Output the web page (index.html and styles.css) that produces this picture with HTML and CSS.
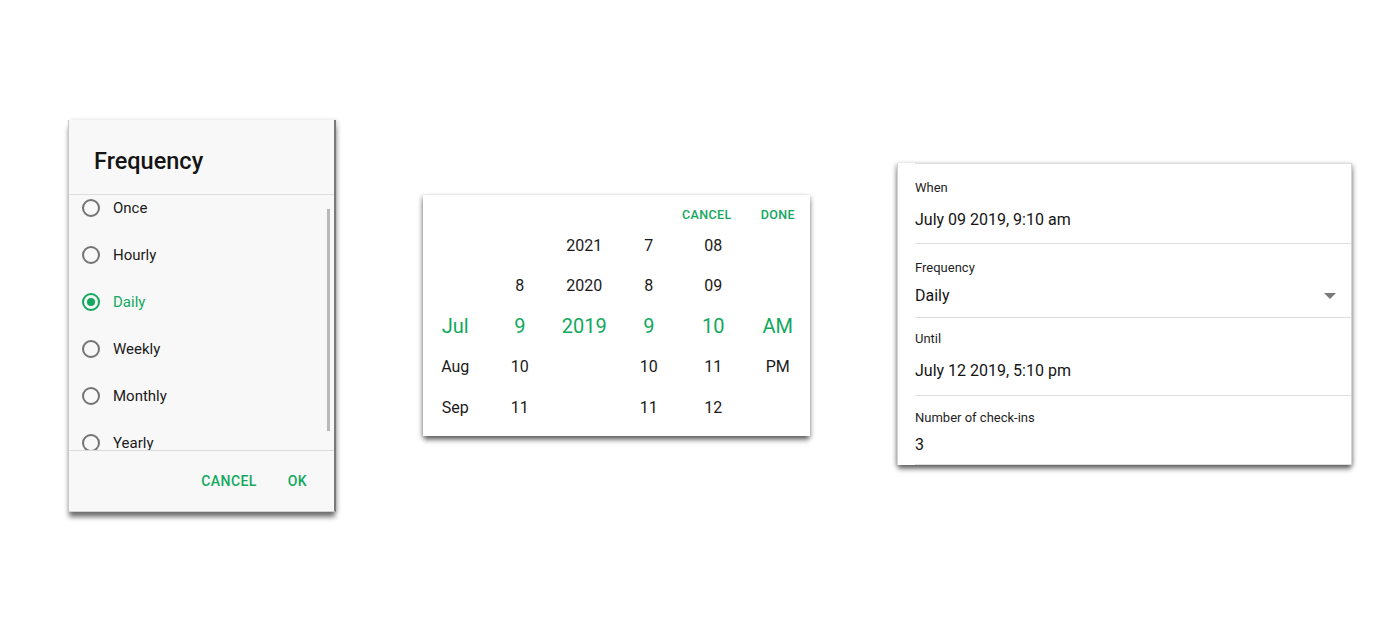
FILE: index.html
```html
<!DOCTYPE html>
<html lang="en">
<head>
<meta charset="utf-8">
<title>Check-in schedule</title>
<link rel="stylesheet" href="styles.css">
</head>
<body>
<main class="stage">

  <!-- Frequency chooser dialog -->
  <section class="dialog">
    <header class="dialog-head">
      <h2 class="dialog-title">Frequency</h2>
    </header>
    <div class="dialog-body">
      <ul class="options">
        <li class="option"><span class="radio"></span><span class="option-label">Once</span></li>
        <li class="option"><span class="radio"></span><span class="option-label">Hourly</span></li>
        <li class="option option-on"><span class="radio"></span><span class="option-label">Daily</span></li>
        <li class="option"><span class="radio"></span><span class="option-label">Weekly</span></li>
        <li class="option"><span class="radio"></span><span class="option-label">Monthly</span></li>
        <li class="option"><span class="radio"></span><span class="option-label">Yearly</span></li>
      </ul>
      <span class="scrollbar"></span>
    </div>
    <footer class="dialog-actions">
      <button class="text-btn">CANCEL</button>
      <button class="text-btn">OK</button>
    </footer>
  </section>

  <!-- Date / time wheel picker -->
  <section class="picker">
    <header class="picker-head">
      <button class="text-btn small">CANCEL</button>
      <button class="text-btn small">DONE</button>
    </header>
    <div class="wheels">
      <div class="wheel">
        <span class="cell"></span><span class="cell"></span>
        <span class="cell active">Jul</span>
        <span class="cell">Aug</span><span class="cell">Sep</span>
      </div>
      <div class="wheel">
        <span class="cell"></span><span class="cell">8</span>
        <span class="cell active">9</span>
        <span class="cell">10</span><span class="cell">11</span>
      </div>
      <div class="wheel">
        <span class="cell">2021</span><span class="cell">2020</span>
        <span class="cell active">2019</span>
        <span class="cell"></span><span class="cell"></span>
      </div>
      <div class="wheel">
        <span class="cell">7</span><span class="cell">8</span>
        <span class="cell active">9</span>
        <span class="cell">10</span><span class="cell">11</span>
      </div>
      <div class="wheel">
        <span class="cell">08</span><span class="cell">09</span>
        <span class="cell active">10</span>
        <span class="cell">11</span><span class="cell">12</span>
      </div>
      <div class="wheel">
        <span class="cell"></span><span class="cell"></span>
        <span class="cell active">AM</span>
        <span class="cell">PM</span><span class="cell"></span>
      </div>
    </div>
  </section>

  <!-- Schedule summary form -->
  <section class="form">
    <div class="field field-when">
      <span class="field-label">When</span>
      <span class="field-value">July 09 2019, 9:10 am</span>
    </div>
    <div class="field field-freq">
      <span class="field-label">Frequency</span>
      <span class="field-value select">Daily<span class="caret"></span></span>
    </div>
    <div class="field field-until">
      <span class="field-label">Until</span>
      <span class="field-value">July 12 2019, 5:10 pm</span>
    </div>
    <div class="field field-count">
      <span class="field-label">Number of check-ins</span>
      <span class="field-value">3</span>
    </div>
  </section>

</main>
</body>
</html>
```

FILE: styles.css
```css
* {
  box-sizing: border-box;
}

html,
body {
  margin: 0;
  padding: 0;
  background: #ffffff;
}

body {
  font-family: Roboto, "Noto Sans", "Liberation Sans", sans-serif;
  color: #1f1f1f;
  width: 1400px;
  height: 630px;
  overflow: hidden;
}

.stage {
  display: flex;
  align-items: flex-start;
  gap: 87px;
  padding-left: 68px;
}

.text-btn {
  border: 0;
  background: none;
  padding: 0;
  margin: 0;
  font-family: inherit;
  font-weight: 500;
  font-size: 14px;
  letter-spacing: 0.4px;
  color: #12a85e;
  line-height: 16px;
}

.text-btn.small {
  font-size: 12.5px;
  letter-spacing: 0.4px;
}

/* ---------- Frequency dialog ---------- */

.dialog {
  margin-top: 120px;
  width: 268px;
  height: 392px;
  background: #f8f8f8;
  border-left: 1px solid #c9c9c9;
  border-right: 2px solid #7a7a7a;
  border-bottom: 1px solid #d0d0d0;
  box-shadow: 0 6px 5px -1px rgba(0, 0, 0, 0.55), 2px 0 4px rgba(0, 0, 0, 0.15);
  display: flex;
  flex-direction: column;
}

.dialog-head {
  height: 75px;
  padding: 27px 0 0 25px;
  border-bottom: 1px solid #dddddd;
}

.dialog-title {
  margin: 0;
  font-size: 23.5px;
  font-weight: 500;
  line-height: 28px;
  color: #141414;
}

.dialog-body {
  position: relative;
  height: 256px;
  overflow: hidden;
  border-bottom: 1px solid #dcdcdc;
}

.options {
  list-style: none;
  margin: -11px 0 0;
  padding: 0;
}

.option {
  height: 47px;
  display: flex;
  align-items: center;
  padding-left: 13px;
}

.radio {
  width: 18px;
  height: 18px;
  border-radius: 50%;
  border: 2px solid #737373;
  flex: none;
  display: flex;
  align-items: center;
  justify-content: center;
}

.option-on .radio {
  border-color: #12a85e;
}

.option-on .radio::after {
  content: "";
  width: 8px;
  height: 8px;
  border-radius: 50%;
  background: #12a85e;
}

.option-label {
  margin-left: 13px;
  font-size: 15px;
  color: #1a1a1a;
}

.option-on .option-label {
  color: #12a85e;
}

.scrollbar {
  position: absolute;
  right: 4px;
  top: 14px;
  width: 3px;
  height: 222px;
  background: #b9b9b9;
}

.dialog-actions {
  flex: 1;
  display: flex;
  justify-content: flex-end;
  align-items: center;
  gap: 31px;
  padding: 0 27px 0 0;
}

/* ---------- Wheel picker ---------- */

.picker {
  margin-top: 195px;
  width: 387px;
  height: 241px;
  background: #ffffff;
  box-shadow: 0 5px 5px -1px rgba(0, 0, 0, 0.5), -2px 1px 4px rgba(0, 0, 0, 0.2), 2px 1px 4px rgba(0, 0, 0, 0.15);
}

.picker-head {
  height: 30px;
  display: flex;
  justify-content: flex-end;
  gap: 29px;
  padding: 9px 15px 0 0;
}

.wheels {
  display: grid;
  grid-template-columns: repeat(6, 1fr);
}

.wheel {
  display: flex;
  flex-direction: column;
}

.cell {
  height: 40.5px;
  display: flex;
  align-items: center;
  justify-content: center;
  font-size: 16px;
  color: #1a1a1a;
}

.cell.active {
  font-size: 20px;
  color: #12a85e;
}

/* ---------- Summary form ---------- */

.form {
  margin-top: 163px;
  width: 455px;
  height: 302px;
  background: #ffffff;
  border-left: 1px solid #d4d4d4;
  border-right: 1px solid #d4d4d4;
  box-shadow: 0 5px 5px -1px rgba(0, 0, 0, 0.5), -2px 1px 4px rgba(0, 0, 0, 0.18), 2px 1px 4px rgba(0, 0, 0, 0.18);
  padding-left: 17px;
  display: flex;
  flex-direction: column;
}

.field {
  display: flex;
  flex-direction: column;
  border-top: 1px solid #dedede;
}

.field-label {
  font-size: 13px;
  line-height: 16px;
  color: #1f1f1f;
}

.field-value {
  font-size: 16px;
  line-height: 20px;
  color: #141414;
}

.field-when {
  height: 80px;
  padding-top: 16px;
  gap: 14px;
}

.field-freq {
  height: 74px;
  padding-top: 16px;
  gap: 10px;
}

.field-until {
  height: 78px;
  padding-top: 13px;
  gap: 14px;
}

.field-count {
  flex: 1;
  padding-top: 14px;
  gap: 9px;
  border-bottom: 1px solid #dedede;
}

.select {
  display: flex;
  align-items: center;
  justify-content: space-between;
  padding-right: 15px;
}

.caret {
  width: 0;
  height: 0;
  border-left: 6px solid transparent;
  border-right: 6px solid transparent;
  border-top: 6px solid #7a7a7a;
}
```
